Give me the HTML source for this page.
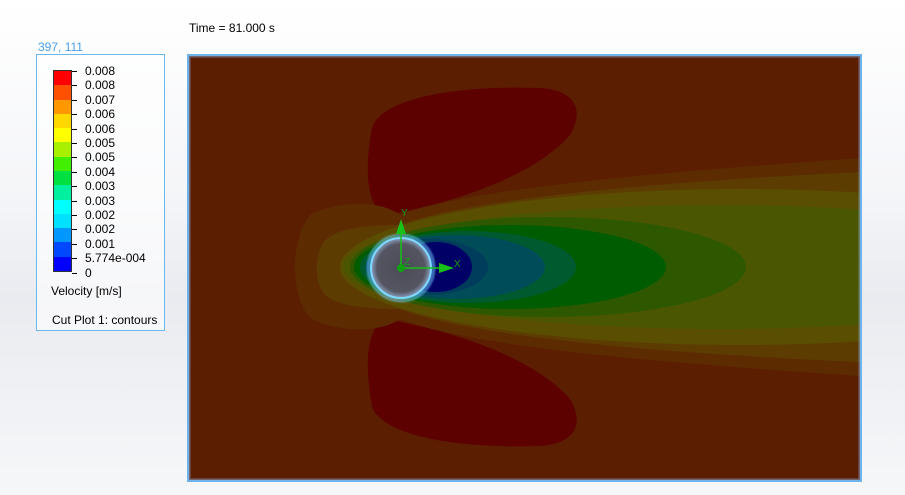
<!DOCTYPE html>
<html><head><meta charset="utf-8"><style>
body{margin:0;width:905px;height:495px;overflow:hidden;background:linear-gradient(#ffffff,#f4f5f8 40%,#e9ebf0 60%,#f6f7f9);font-family:"Liberation Sans",sans-serif;position:relative}
.t{position:absolute;font-size:12px;color:#000}
#leg{position:absolute;left:36px;top:54px;width:127px;height:275px;border:1px solid #6ab8f0;background:rgba(255,255,255,0.6)}
.bar{position:absolute;left:53px;top:70px;width:19px;height:202px;border:1px solid #333;box-sizing:border-box;display:flex;flex-direction:column}
.bar div{flex:1}
.lab{position:absolute;left:85px;font-size:12px;line-height:12px}
.tick{position:absolute;left:72px;width:5px;height:1px;background:#000}
</style></head><body>
<div class="t" style="left:189px;top:21px">Time = 81.000 s</div>
<div class="t" style="left:38px;top:40px;color:#4aa0e8">397, 111</div>
<div id="leg"></div>
<div class="bar">
<div style="background:#ff0000"></div><div style="background:#ff5000"></div><div style="background:#ff9800"></div><div style="background:#ffd800"></div><div style="background:#ffff00"></div><div style="background:#a8f000"></div><div style="background:#40f000"></div><div style="background:#00e040"></div><div style="background:#00f0a0"></div><div style="background:#00ffff"></div><div style="background:#00e0ff"></div><div style="background:#0098ff"></div><div style="background:#0048ff"></div><div style="background:#0000ff"></div>
</div>
<div id="labs"></div>
<div class="t" style="left:51px;top:284px">Velocity [m/s]</div>
<div class="t" style="left:52px;top:313px">Cut Plot 1: contours</div>
<script>
var v=["0.008","0.008","0.007","0.006","0.006","0.005","0.005","0.004","0.003","0.003","0.002","0.002","0.001","5.774e-004","0"];
var h="";for(var i=0;i<15;i++){var y=71+i*14.4;h+='<div class="tick" style="top:'+Math.round(y)+'px"></div><div class="lab" style="top:'+Math.round(y-6)+'px">'+v[i]+'</div>';}
document.getElementById("labs").innerHTML=h;
</script>
<svg style="position:absolute;left:0;top:0" width="905" height="495">
<defs>
<filter id="b" x="-5%" y="-5%" width="110%" height="110%"><feGaussianBlur stdDeviation="0.8"/></filter>
<radialGradient id="cg"><stop offset="0" stop-color="#4c4c58"/><stop offset="0.8" stop-color="#555562"/><stop offset="1" stop-color="#8aa0c0"/></radialGradient>
<clipPath id="cp"><rect x="189" y="56" width="671" height="424"/></clipPath>
</defs>
<rect x="187" y="54" width="675" height="428" fill="#5cb8f4"/>
<g clip-path="url(#cp)">
<rect x="189" y="56" width="671" height="424" fill="#5c1e00"/>
<path d="M372,128 C380,100 450,85 540,88 C575,90 585,110 570,135 C540,170 470,200 385,215 C365,205 365,165 372,128Z" fill="#5c0000"/>
<path d="M372,406 C380,434 450,449 540,446 C575,444 585,424 570,399 C540,364 470,334 385,319 C365,329 365,369 372,406Z" fill="#5c0000"/>
<g>
<path d="M860,158 C700,170 480,185 400,215 C380,200 340,200 310,215 C290,240 290,295 310,318 C340,333 380,333 400,319 C480,350 700,365 860,376Z" fill="#5c2c00"/>
<path d="M860,172 C700,180 480,195 400,225 C370,225 330,228 322,245 C315,260 315,280 322,290 C330,307 370,309 400,309 C480,340 700,355 860,362Z" fill="#5c3c00"/>
<ellipse cx="740" cy="267" rx="400" ry="78" fill="#5a4e00"/>
<ellipse cx="720" cy="267" rx="377" ry="62" fill="#4a5600"/>
<ellipse cx="548" cy="267" rx="198" ry="50" fill="#2e5800"/>
<ellipse cx="510" cy="267" rx="156" ry="42" fill="#005c00"/>
<ellipse cx="468" cy="267" rx="108" ry="36" fill="#005a30"/>
<ellipse cx="455" cy="267" rx="90" ry="32" fill="#004c58"/>
<ellipse cx="428" cy="267" rx="60" ry="28" fill="#003c5c"/>
<ellipse cx="436" cy="267" rx="36" ry="25" fill="#000066"/>
</g>
</g>
<rect x="189" y="56" width="671" height="424" fill="none" stroke="rgba(140,170,220,0.5)" stroke-width="3"/>
<circle cx="401" cy="268" r="32" fill="none" stroke="#6fd0ff" stroke-opacity="0.5" stroke-width="5" filter="url(#b)"/>
<circle cx="401" cy="268" r="30" fill="url(#cg)" stroke="#7fd8ff" stroke-width="2"/>
<line x1="401" y1="268" x2="401" y2="228" stroke="#18c018" stroke-width="1.5"/>
<path d="M396,234 L401,219 L406,234Z" fill="#18c018"/>
<line x1="401" y1="268" x2="445" y2="268" stroke="#18c018" stroke-width="1.5"/>
<path d="M439,263 L454,268 L439,273Z" fill="#18c018"/>
<circle cx="401" cy="268" r="4" fill="#10a010"/>
<text x="404" y="265" font-size="10" fill="#10a010" font-family="Liberation Sans">Z</text>
<text x="454" y="267" font-size="10" fill="#10a010" font-family="Liberation Sans">X</text>
<text x="401" y="216" font-size="10" fill="#10a010" font-family="Liberation Sans">Y</text>
</svg>
</body></html>
